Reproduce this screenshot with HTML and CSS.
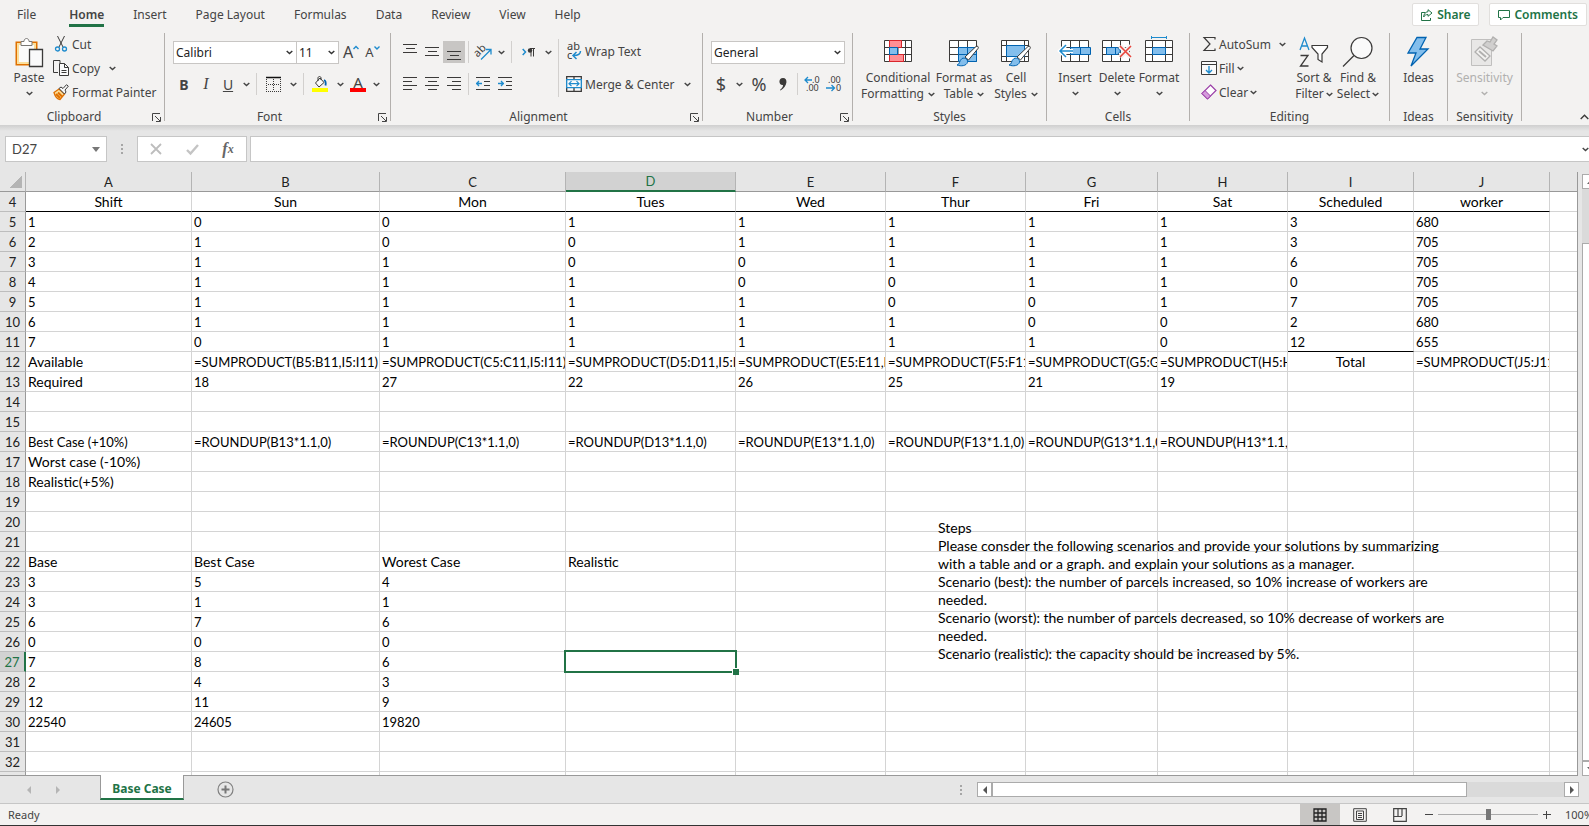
FILE: index.html
```html
<!DOCTYPE html>
<html lang="en">
<head>
  <meta charset="UTF-8">
  <meta name="viewport" content="width=device-width, initial-scale=1.0">
  <title>Base Case</title>
  <link rel="stylesheet" href="styles.css">
</head>
<body>
  <svg class="defs" aria-hidden="true">
    <symbol id="chev" viewBox="0 0 7 5"><path d="M.7.9 3.5 3.6 6.3.9" fill="none" stroke="currentColor" stroke-width="1.4"/></symbol>
    <symbol id="launch" viewBox="0 0 9 9"><path d="M.5 8V.5H8M3 3l5 5M8.500 4v4.500H4" fill="none" stroke="currentColor"/></symbol>
    <symbol id="brush" viewBox="0 0 24 22"><path d="M9 12 20 1.500c1.500-1 3 .3 2 2L12.500 15z" fill="#fff" stroke="#3b3a39"/><path d="M1 20c3-.3 2-4.500 5-6.500 3-1.300 6 1 5.500 3.700C10.500 21 5 21.500 1 20z" fill="#83beec" stroke="#0063b1"/></symbol>
  </svg>

  <header class="topbar">
    <nav class="tabs">
      <a href="#" class="file">File</a>
      <a href="#" class="active">Home</a>
      <a href="#">Insert</a>
      <a href="#">Page Layout</a>
      <a href="#">Formulas</a>
      <a href="#">Data</a>
      <a href="#">Review</a>
      <a href="#">View</a>
      <a href="#">Help</a>
    </nav>
    <div class="top-actions">
      <button class="pill"><svg width="12" height="12" viewBox="0 0 12 12"><path d="M4 3.500H.5v8h9V9M7 .7l4 3.300-4 3.300V5.500C5 5.500 3.500 6.300 2.700 8c0-2.800 1.500-5 4.300-5.300z" fill="none" stroke="#217346"/></svg>Share</button>
      <button class="pill"><svg width="12" height="12" viewBox="0 0 12 12"><path d="M.5 1.500h11v7H5L2.500 11V8.500h-2z" fill="none" stroke="#217346"/></svg>Comments</button>
    </div>
  </header>

  <section class="ribbon">
    <div class="group g-clipboard">
      <div class="group-body">
        <button class="big paste">
          <svg width="28" height="32" viewBox="0 0 28 32"><path d="M1.500 6.500h20v22h-20z" fill="#fff" stroke="#e07000" stroke-width="2"/><path d="M3 8h17v19H3z" fill="#fbfbfb" stroke="#fbdf9b" stroke-width="2"/><path d="M6 9.500v-4h3c0-4 5-4 5 0h3v4z" fill="#fff" stroke="#797775"/><path d="M14.500 13.500h13v17h-13z" fill="#fafafa" stroke="#3b3a39" stroke-width="1.300"/></svg>
          <span>Paste</span><svg class="chev"><use href="#chev"/></svg>
        </button>
        <div class="stack clip-stack">
          <button class="small"><svg width="16" height="16" viewBox="0 0 16 16"><path d="M4.500 0 10 11M11.500 0 6 11" fill="none" stroke="#3b3a39"/><circle cx="4.500" cy="13" r="2" fill="none" stroke="#1e8bcd" stroke-width="1.300"/><circle cx="11.500" cy="13" r="2" fill="none" stroke="#1e8bcd" stroke-width="1.300"/></svg>Cut</button>
          <button class="small"><svg width="16" height="16" viewBox="0 0 16 16"><path d="M5 12.500H.5V.5H7V3" fill="none" stroke="#3b3a39"/><path d="M6.500 3.500h5l4 4v8h-9z" fill="#fafafa" stroke="#3b3a39"/><path d="M11.500 3.500v4h4M8.500 10.500h5M8.500 12.500h5" fill="none" stroke="#3b3a39"/></svg>Copy<svg class="chev gap-l"><use href="#chev"/></svg></button>
          <button class="small"><svg width="16" height="16" viewBox="0 0 16 16"><path d="M1 8.500 6 5l5.500 5L7 15.500C3.500 15 2 12 1 8.500z" fill="#fbdf9b" stroke="#e07000" stroke-width="1.300"/><path d="m3 10 4 4M5 8.500l4 4" stroke="#e07000" stroke-width="2"/><path d="M6 4.500 8 3l2 1.500L13.500.7l1.800 1.500L12 6l1 2-1.500 2z" fill="#fafafa" stroke="#3b3a39"/></svg>Format Painter</button>
        </div>
      </div>
      <div class="group-name has-launcher">Clipboard<button class="launcher" aria-label="Clipboard settings"><svg width="9" height="9"><use href="#launch"/></svg></button></div>
    </div>

    <div class="group g-font">
      <div class="group-body rows">
        <div class="row">
          <select class="sel font-name" aria-label="Font"><option>Calibri</option></select>
          <select class="sel font-size" aria-label="Font size"><option>11</option></select>
          <button class="ico grow-font" aria-label="Increase font size"><span class="glyph-a">A</span><svg width="6" height="14" viewBox="0 0 6 14"><path d="M.5 4 3 1.500 5.500 4" fill="none" stroke="#1e8bcd" stroke-width="1.400"/></svg></button>
          <button class="ico shrink-font" aria-label="Decrease font size"><span class="glyph-a sm">A</span><svg width="6" height="14" viewBox="0 0 6 14"><path d="M.5 1.500 3 4l2.500-2.500" fill="none" stroke="#1e8bcd" stroke-width="1.400"/></svg></button>
        </div>
        <div class="row second">
          <button class="ico w22 fmt"><b>B</b></button>
          <button class="ico w22 fmt"><i>I</i></button>
          <button class="ico w22 fmt"><u>U</u></button>
          <button class="ico w14" aria-label="Underline options"><svg class="chev"><use href="#chev"/></svg></button>
          <span class="sep"></span>
          <button class="ico w26" aria-label="Borders"><svg width="15" height="15" viewBox="0 0 15 15"><path d="M.5 2v13M14.500 2v13M7.500 2v11M2 7.500h12M2 14.500h12" stroke="#3b3a39" stroke-dasharray="1 1" fill="none"/><path d="M0 .5h15" stroke="#111" stroke-width="1.500"/></svg></button>
          <button class="ico w14" aria-label="Border options"><svg class="chev"><use href="#chev"/></svg></button>
          <span class="sep"></span>
          <button class="ico w26" aria-label="Fill color"><svg width="16" height="16" viewBox="0 0 16 16"><path d="M3.500 7 8 2l4 4.500-5 4.500z" fill="#fafafa" stroke="#3b3a39"/><path d="M6 5V2c0-2 3-2 3 0v2" fill="none" stroke="#3b3a39"/><path d="M12 4c2 1 2 3 1.500 5.500" fill="none" stroke="#0063b1" stroke-width="1.800"/><path d="M0 12h16v4H0z" fill="#ff0"/></svg></button>
          <button class="ico w14" aria-label="Fill color options"><svg class="chev"><use href="#chev"/></svg></button>
          <button class="ico w22 font-color" aria-label="Font color"><span>A</span></button>
          <button class="ico w14" aria-label="Font color options"><svg class="chev"><use href="#chev"/></svg></button>
        </div>
      </div>
      <div class="group-name has-launcher">Font<button class="launcher" aria-label="Font settings"><svg width="9" height="9"><use href="#launch"/></svg></button></div>
    </div>

    <div class="group g-align">
      <div class="group-body">
        <div class="rows">
          <div class="row">
            <button class="ico w22" aria-label="Top align"><svg width="14" height="16" viewBox="0 0 14 16"><path d="M0 .5h14M3 4.500h9M0 8.500h14" stroke="#3b3a39"/></svg></button>
            <button class="ico w22" aria-label="Middle align"><svg width="14" height="16" viewBox="0 0 14 16"><path d="M0 3.500h14M3 7.500h9M0 11.500h14" stroke="#3b3a39"/></svg></button>
            <button class="ico w22 on" aria-label="Bottom align"><svg width="14" height="16" viewBox="0 0 14 16"><path d="M0 7.500h14M3 11.500h9M0 15.500h14" stroke="#3b3a39"/></svg></button>
            <span class="sep"></span>
            <button class="ico w22" aria-label="Orientation"><svg width="17" height="16" viewBox="0 0 17 16"><text x="-1" y="11" transform="rotate(-45 4 8)" font-size="11" fill="#3b3a39">ab</text><path d="M6 15.500 15.500 6M11 5.500h5v5" fill="none" stroke="#1e8bcd" stroke-width="1.300"/></svg></button>
            <button class="ico w14" aria-label="Orientation options"><svg class="chev"><use href="#chev"/></svg></button>
            <span class="sep"></span>
            <button class="ico w26" aria-label="Text direction"><svg width="13" height="12" viewBox="0 0 13 12"><path d="M.7 3 3.500 6 .7 9" fill="none" stroke="#1e8bcd" stroke-width="1.500"/><path d="M9 2.500v8M11.500 2.500v8M8 2.500h5" stroke="#3b3a39" fill="none"/><circle cx="8" cy="4.500" r="2.200" fill="#3b3a39"/></svg></button>
            <button class="ico w14" aria-label="Direction options"><svg class="chev"><use href="#chev"/></svg></button>
          </div>
          <div class="row second">
            <button class="ico w22" aria-label="Align left"><svg width="14" height="14" viewBox="0 0 14 14"><path d="M0 .5h14M0 4.500h9M0 8.500h14M0 12.500h9" stroke="#3b3a39"/></svg></button>
            <button class="ico w22" aria-label="Center"><svg width="14" height="14" viewBox="0 0 14 14"><path d="M0 .5h14M3 4.500h9M0 8.500h14M3 12.500h9" stroke="#3b3a39"/></svg></button>
            <button class="ico w22" aria-label="Align right"><svg width="14" height="14" viewBox="0 0 14 14"><path d="M0 .5h14M5 4.500h9M0 8.500h14M5 12.500h9" stroke="#3b3a39"/></svg></button>
            <span class="sep"></span>
            <button class="ico w22" aria-label="Decrease indent"><svg width="14" height="14" viewBox="0 0 14 14"><path d="M0 .5h14M8 4.500h6M8 8.500h6M0 12.500h14" stroke="#3b3a39"/><path d="M0 6.500h6M3 4 .7 6.500 3 9" stroke="#1e8bcd" stroke-width="1.300" fill="none"/></svg></button>
            <button class="ico w22" aria-label="Increase indent"><svg width="14" height="14" viewBox="0 0 14 14"><path d="M0 .5h14M8 4.500h6M8 8.500h6M0 12.500h14" stroke="#3b3a39"/><path d="M0 6.500h6M3 4l2.300 2.500L3 9" stroke="#1e8bcd" stroke-width="1.300" fill="none"/></svg></button>
          </div>
        </div>
        <div class="stack wrap-stack">
          <button class="small"><svg width="16" height="18" viewBox="0 0 16 18"><text x="1" y="8" font-size="11" fill="#3b3a39">ab</text><text x="1" y="17" font-size="11" fill="#3b3a39">c</text><path d="M14.500 9c0 4-3 4.500-7 4.500M10.500 10 7 13.500l3.500 3.500" fill="none" stroke="#1e8bcd" stroke-width="1.500"/></svg>Wrap Text</button>
          <button class="small"><svg width="16" height="16" viewBox="0 0 16 16"><path d="M.7.700h14.600v14.600H.7zM8 1v3M8 12v3" fill="#fafafa" stroke="#3b3a39" stroke-width="1.300"/><path d="M.7 3.700h14.600v8H.7z" fill="#fafafa" stroke="#1e8bcd" stroke-width="1.300"/><path d="M3 7.700h10M5.500 5.200 3 7.700l2.500 2.500M10.500 5.200 13 7.700l-2.500 2.500" fill="none" stroke="#1e8bcd" stroke-width="1.200"/></svg>Merge &amp; Center<svg class="chev gap-l"><use href="#chev"/></svg></button>
        </div>
      </div>
      <div class="group-name has-launcher">Alignment<button class="launcher" aria-label="Alignment settings"><svg width="9" height="9"><use href="#launch"/></svg></button></div>
    </div>

    <div class="group g-number">
      <div class="group-body rows">
        <div class="row">
          <select class="sel number-format" aria-label="Number format"><option>General</option></select>
        </div>
        <div class="row second">
          <button class="ico w22 num">$</button>
          <button class="ico w14" aria-label="Currency options"><svg class="chev"><use href="#chev"/></svg></button>
          <button class="ico w26 num">%</button>
          <button class="ico w22" aria-label="Comma style"><svg width="8" height="13" viewBox="0 0 8 13"><path d="M4 0c5 0 5 8-2.500 12.500L1 12c2.500-2 3-3.500 3-5C-.5 7.500-1 0 4 0z" fill="#3b3a39"/></svg></button>
          <span class="sep"></span>
          <button class="ico w22" aria-label="Increase decimal"><svg width="16" height="16" viewBox="0 0 16 16"><text x="8" y="7" font-size="9" fill="#3b3a39">.0</text><text x="2" y="15" font-size="9" fill="#3b3a39">.00</text><path d="M1 4h7M4 1 1 4l3 3" fill="none" stroke="#1e8bcd" stroke-width="1.300"/></svg></button>
          <button class="ico w22" aria-label="Decrease decimal"><svg width="16" height="16" viewBox="0 0 16 16"><text x="2" y="7" font-size="9" fill="#3b3a39">.00</text><text x="10" y="15" font-size="9" fill="#3b3a39">0</text><path d="M0 12h8M5.500 9l3 3-3 3" fill="none" stroke="#1e8bcd" stroke-width="1.300"/></svg></button>
        </div>
      </div>
      <div class="group-name has-launcher">Number<button class="launcher" aria-label="Number settings"><svg width="9" height="9"><use href="#launch"/></svg></button></div>
    </div>

    <div class="group g-styles">
      <div class="group-body">
        <button class="big w80">
          <svg width="28" height="32" viewBox="0 0 28 32"><path d="M.5 4.500h27v21H.5zM5.500 4v22M14 4v22M21.500 4v22M0 11.500h28M0 18.500h28" fill="#fff" stroke="#3b3a39"/><path d="M5.500 4.500h12v7h-12zM5.500 18.500h14v7h-14z" fill="#ff8f94" stroke="#d9262c"/><path d="M5.500 11.500h8v7h-8z" fill="#83beec" stroke="#0063b1"/></svg>
          <span>Conditional</span><span>Formatting<svg class="chev"><use href="#chev"/></svg></span>
        </button>
        <button class="big w52">
          <svg width="32" height="32" viewBox="0 0 32 32"><path d="M1.500 4.500h27v21h-27zM10.500 4v22M19.500 4v22M1 11.500h28M1 18.500h28" fill="#fff" stroke="#3b3a39"/><path d="M10.500 11.500h18v14h-18z" fill="#83beec" stroke="#0063b1"/><path d="M19.500 12v13M11 18.500h17" stroke="#0063b1"/><use href="#brush" x="8" y="9" width="24" height="22"/></svg>
          <span>Format as</span><span>Table<svg class="chev"><use href="#chev"/></svg></span>
        </button>
        <button class="big w52">
          <svg width="32" height="32" viewBox="0 0 32 32"><path d="M1.500 4.500h27v21h-27zM6.500 4v22M24.500 4v22M1 9.500h28M1 20.500h28" fill="#fff" stroke="#3b3a39"/><path d="M6.500 9.500h18v11h-18z" fill="#83beec" stroke="#0063b1"/><use href="#brush" x="8" y="9" width="24" height="22"/></svg>
          <span>Cell</span><span>Styles<svg class="chev"><use href="#chev"/></svg></span>
        </button>
      </div>
      <div class="group-name">Styles</div>
    </div>

    <div class="group g-cells">
      <div class="group-body">
        <button class="big w42">
          <svg width="32" height="32" viewBox="0 0 32 32"><path d="M2.500 4.500h27v21h-27zM11.500 4v22M20.500 4v22M2 11.500h28M2 18.500h28" fill="#fff" stroke="#3b3a39"/><path d="M11.500 11.500h20v7h-20zM21.500 12v7" fill="#83beec" stroke="#0063b1"/><path d="M14 15H1M7 9l-6 6 6 6" fill="none" stroke="#fff" stroke-width="4"/><path d="M14 15H1M7 9l-6 6 6 6" fill="none" stroke="#1e8bcd" stroke-width="1.500"/></svg>
          <span>Insert</span><svg class="chev"><use href="#chev"/></svg>
        </button>
        <button class="big w42">
          <svg width="32" height="32" viewBox="0 0 32 32"><path d="M1.500 4.500h27v21h-27zM10.500 4v22M19.500 4v22M1 11.500h28M1 18.500h28" fill="#fff" stroke="#3b3a39"/><path d="M5.500 11.500h11l3 3.500-3 3.500h-11zM14.500 12v6" fill="#83beec" stroke="#0063b1"/><path d="m19 10 11 11M30 10 19 21" stroke="#f3f2f1" stroke-width="5"/><path d="m19 10 11 11M30 10 19 21" stroke="#e8453c" stroke-width="1.600"/></svg>
          <span>Delete</span><svg class="chev"><use href="#chev"/></svg>
        </button>
        <button class="big w42">
          <svg width="28" height="32" viewBox="0 0 28 32"><path d="M.5 4.500h27v21H.5zM7.500 4v22M20.500 4v22M0 11.500h28M0 18.500h28" fill="#fff" stroke="#3b3a39"/><path d="M7.500 11.500h13v7h-13z" fill="#83beec" stroke="#0063b1"/><path d="M6.500 0v3M21.500 0v3M7 1.500h14" stroke="#1e8bcd"/></svg>
          <span>Format</span><svg class="chev"><use href="#chev"/></svg>
        </button>
      </div>
      <div class="group-name">Cells</div>
    </div>

    <div class="group g-editing">
      <div class="group-body">
        <div class="stack edit-stack">
          <button class="small"><svg width="16" height="16" viewBox="0 0 16 16"><path d="M14 3.500V1.500H3L9 8l-6 6.500h11v-2" fill="none" stroke="#3b3a39" stroke-width="1.200"/></svg>AutoSum<svg class="chev gap-l"><use href="#chev"/></svg></button>
          <button class="small"><svg width="16" height="16" viewBox="0 0 16 16"><path d="M.5 1.500h15v13H.5zM.5 4.500h15" fill="#fafafa" stroke="#3b3a39"/><path d="M8 6v7M5 10l3 3 3-3" fill="none" stroke="#1e8bcd" stroke-width="1.400"/></svg>Fill<svg class="chev"><use href="#chev"/></svg></button>
          <button class="small"><svg width="16" height="16" viewBox="0 0 16 16"><path d="M9.500 1 15 6.500 6.500 15 1 9.500z" fill="#fff" stroke="#9b3fa8" stroke-width="1.200"/><path d="M4 6.500 9.500 12l-3 3L1 9.500z" fill="#d59bdc" stroke="#9b3fa8"/></svg>Clear<svg class="chev"><use href="#chev"/></svg></button>
        </div>
        <button class="big w44">
          <svg width="30" height="32" viewBox="0 0 30 32"><path d="m1 14 4.500-12L10 14M2.500 10h6" fill="none" stroke="#1e8bcd" stroke-width="1.300"/><path d="M1.500 19.500h7.500L1.500 30H9.500" fill="none" stroke="#3b3a39" stroke-width="1.300"/><path d="M13 9.500h15.500v2L23 18v8l-4-2.500V18l-6-6.500z" fill="#fff" stroke="#3b3a39" stroke-width="1.200"/></svg>
          <span>Sort &amp;</span><span>Filter<svg class="chev"><use href="#chev"/></svg></span>
        </button>
        <button class="big w44">
          <svg width="30" height="32" viewBox="0 0 30 32"><circle cx="18.500" cy="12" r="10.500" fill="#fafafa" stroke="#3b3a39" stroke-width="1.200"/><path d="M11 19.500 0 30.500" stroke="#3b3a39" stroke-width="1.300"/></svg>
          <span>Find &amp;</span><span>Select<svg class="chev"><use href="#chev"/></svg></span>
        </button>
      </div>
      <div class="group-name">Editing</div>
    </div>

    <div class="group g-ideas">
      <div class="group-body">
        <button class="big">
          <svg width="22" height="32" viewBox="0 0 22 32"><path d="M10 1.500h9L13 13h8L4 30l5-13H1z" fill="#83beec" stroke="#0063b1" stroke-width="1.300"/></svg>
          <span>Ideas</span>
        </button>
      </div>
      <div class="group-name">Ideas</div>
    </div>

    <div class="group g-sens">
      <div class="group-body">
        <button class="big" disabled>
          <svg width="28" height="32" viewBox="0 0 28 32"><path d="M1.500 3.500h20v26h-20z" fill="#e8e7e6" stroke="#c0bfbe"/><path d="m5 16 5-5L20 20l-5 5z" fill="#f3f2f1" stroke="#b1b0af" stroke-width="1.300"/><path d="m9 15 7 6" stroke="#b1b0af" stroke-width="2"/><path d="m13 9 4-4 3 1 3-5 4 3-3 4 3 2-4 5z" fill="#d0cfce" stroke="#b1b0af" stroke-width="1.300"/></svg>
          <span>Sensitivity</span><svg class="chev"><use href="#chev"/></svg>
        </button>
      </div>
      <div class="group-name">Sensitivity</div>
    </div>
    <button class="collapse" aria-label="Collapse ribbon"><svg width="9" height="6" viewBox="0 0 9 6"><path d="M.7 5 4.500 1.300 8.300 5" fill="none" stroke="#3b3a39" stroke-width="1.400"/></svg></button>
  </section>

  <section class="formula-bar">
    <div class="name-box"><input type="text" value="D27" aria-label="Name box"><svg width="8" height="5" viewBox="0 0 8 5"><path d="M0 0h8L4 5z" fill="#777"/></svg></div>
    <span class="dots"><i></i><i></i><i></i></span>
    <div class="fx-buttons">
      <button aria-label="Cancel"><svg width="12" height="12" viewBox="0 0 12 12"><path d="m1 1 10 10M11 1 1 11" stroke="#bdbdbd" stroke-width="1.800"/></svg></button>
      <button aria-label="Enter"><svg width="13" height="11" viewBox="0 0 13 11"><path d="m1 6 3.500 3.500L12 1" fill="none" stroke="#c4c4c4" stroke-width="2.400"/></svg></button>
      <button class="fx" aria-label="Insert function">f<sub>x</sub></button>
    </div>
    <input class="formula" type="text" aria-label="Formula">
    <button class="expand" aria-label="Expand formula bar"><svg class="chev"><use href="#chev"/></svg></button>
  </section>

  <main class="sheet">
    <div class="grid-wrap">
      <table class="grid">
        <colgroup><col class="c-head"><col class="c-a"><col class="c-b"><col class="c-c"><col class="c-d"><col class="c-e"><col class="c-f"><col class="c-g"><col class="c-h"><col class="c-i"><col class="c-j"><col></colgroup>
        <thead>
          <tr><th class="corner"></th><th>A</th><th>B</th><th>C</th><th class="sel-col">D</th><th>E</th><th>F</th><th>G</th><th>H</th><th>I</th><th>J</th><th></th></tr>
        </thead>
        <tbody>
          <tr class="titles"><th>4</th><td>Shift</td><td>Sun</td><td>Mon</td><td>Tues</td><td>Wed</td><td>Thur</td><td>Fri</td><td>Sat</td><td>Scheduled</td><td>worker</td><td></td></tr>
          <tr><th>5</th><td>1</td><td>0</td><td>0</td><td>1</td><td>1</td><td>1</td><td>1</td><td>1</td><td>3</td><td>680</td><td></td></tr>
          <tr><th>6</th><td>2</td><td>1</td><td>0</td><td>0</td><td>1</td><td>1</td><td>1</td><td>1</td><td>3</td><td>705</td><td></td></tr>
          <tr><th>7</th><td>3</td><td>1</td><td>1</td><td>0</td><td>0</td><td>1</td><td>1</td><td>1</td><td>6</td><td>705</td><td></td></tr>
          <tr><th>8</th><td>4</td><td>1</td><td>1</td><td>1</td><td>0</td><td>0</td><td>1</td><td>1</td><td>0</td><td>705</td><td></td></tr>
          <tr><th>9</th><td>5</td><td>1</td><td>1</td><td>1</td><td>1</td><td>0</td><td>0</td><td>1</td><td>7</td><td>705</td><td></td></tr>
          <tr><th>10</th><td>6</td><td>1</td><td>1</td><td>1</td><td>1</td><td>1</td><td>0</td><td>0</td><td>2</td><td>680</td><td></td></tr>
          <tr><th>11</th><td>7</td><td>0</td><td>1</td><td>1</td><td>1</td><td>1</td><td>1</td><td>0</td><td class="line">12</td><td>655</td><td></td></tr>
          <tr><th>12</th><td class="text">Available</td><td>=SUMPRODUCT(B5:B11,I5:I11)</td><td>=SUMPRODUCT(C5:C11,I5:I11)</td><td>=SUMPRODUCT(D5:D11,I5:I11)</td><td>=SUMPRODUCT(E5:E11,I5:I11)</td><td>=SUMPRODUCT(F5:F11,I5:I11)</td><td>=SUMPRODUCT(G5:G11,I5:I11)</td><td>=SUMPRODUCT(H5:H11,I5:I11)</td><td class="text center">Total</td><td>=SUMPRODUCT(J5:J11,I5:I11)</td><td></td></tr>
          <tr><th>13</th><td class="text">Required</td><td>18</td><td>27</td><td>22</td><td>26</td><td>25</td><td>21</td><td>19</td><td></td><td></td><td></td></tr>
          <tr><th>14</th><td></td><td></td><td></td><td></td><td></td><td></td><td></td><td></td><td></td><td></td><td></td></tr>
          <tr><th>15</th><td></td><td></td><td></td><td></td><td></td><td></td><td></td><td></td><td></td><td></td><td></td></tr>
          <tr><th>16</th><td>Best Case (+10%)</td><td>=ROUNDUP(B13*1.1,0)</td><td>=ROUNDUP(C13*1.1,0)</td><td>=ROUNDUP(D13*1.1,0)</td><td>=ROUNDUP(E13*1.1,0)</td><td>=ROUNDUP(F13*1.1,0)</td><td>=ROUNDUP(G13*1.1,0)</td><td>=ROUNDUP(H13*1.1,0)</td><td></td><td></td><td></td></tr>
          <tr><th>17</th><td class="text">Worst case (-10%)</td><td></td><td></td><td></td><td></td><td></td><td></td><td></td><td></td><td></td><td></td></tr>
          <tr><th>18</th><td class="text">Realistic(+5%)</td><td></td><td></td><td></td><td></td><td></td><td></td><td></td><td></td><td></td><td></td></tr>
          <tr><th>19</th><td></td><td></td><td></td><td></td><td></td><td></td><td></td><td></td><td></td><td></td><td></td></tr>
          <tr><th>20</th><td></td><td></td><td></td><td></td><td></td><td></td><td></td><td></td><td></td><td></td><td></td></tr>
          <tr><th>21</th><td></td><td></td><td></td><td></td><td></td><td></td><td></td><td></td><td></td><td></td><td></td></tr>
          <tr><th>22</th><td class="text">Base</td><td class="text">Best Case</td><td class="text">Worest Case</td><td class="text">Realistic</td><td></td><td></td><td></td><td></td><td></td><td></td><td></td></tr>
          <tr><th>23</th><td>3</td><td>5</td><td>4</td><td></td><td></td><td></td><td></td><td></td><td></td><td></td><td></td></tr>
          <tr><th>24</th><td>3</td><td>1</td><td>1</td><td></td><td></td><td></td><td></td><td></td><td></td><td></td><td></td></tr>
          <tr><th>25</th><td>6</td><td>7</td><td>6</td><td></td><td></td><td></td><td></td><td></td><td></td><td></td><td></td></tr>
          <tr><th>26</th><td>0</td><td>0</td><td>0</td><td></td><td></td><td></td><td></td><td></td><td></td><td></td><td></td></tr>
          <tr><th class="sel-row">27</th><td>7</td><td>8</td><td>6</td><td class="active-cell"></td><td></td><td></td><td></td><td></td><td></td><td></td><td></td></tr>
          <tr><th>28</th><td>2</td><td>4</td><td>3</td><td></td><td></td><td></td><td></td><td></td><td></td><td></td><td></td></tr>
          <tr><th>29</th><td>12</td><td>11</td><td>9</td><td></td><td></td><td></td><td></td><td></td><td></td><td></td><td></td></tr>
          <tr><th>30</th><td>22540</td><td>24605</td><td>19820</td><td></td><td></td><td></td><td></td><td></td><td></td><td></td><td></td></tr>
          <tr><th>31</th><td></td><td></td><td></td><td></td><td></td><td></td><td></td><td></td><td></td><td></td><td></td></tr>
          <tr><th>32</th><td></td><td></td><td></td><td></td><td></td><td></td><td></td><td></td><td></td><td></td><td></td></tr>
          <tr><th></th><td></td><td></td><td></td><td></td><td></td><td></td><td></td><td></td><td></td><td></td><td></td></tr>
        </tbody>
      </table>
      <div class="note">
        <p>Steps</p>
        <p>Please consder the following scenarios and provide your solutions by summarizing with a table and or a graph. and explain your solutions as a manager.</p>
        <p>Scenario (best): the number of parcels increased, so 10% increase of workers are needed.</p>
        <p>Scenario (worst): the number of parcels decreased, so 10% decrease of workers are needed.</p>
        <p>Scenario (realistic): the capacity should be increased by 5%.</p>
      </div>
    </div>
    <div class="vscroll">
      <button aria-label="Scroll up"><svg width="7" height="4" viewBox="0 0 7 4"><path d="M0 4h7L3.500 0z" fill="#666"/></svg></button>
      <div class="vtrack"><div class="vthumb"></div></div>
      <button aria-label="Scroll down"><svg width="7" height="4" viewBox="0 0 7 4"><path d="M0 0h7L3.500 4z" fill="#666"/></svg></button>
    </div>
  </main>

  <section class="sheet-tabs">
    <div class="tab-nav">
      <button aria-label="Previous sheet"><svg width="4" height="8" viewBox="0 0 4 8"><path d="M4 0v8L0 4z" fill="#b5b5b5"/></svg></button>
      <button aria-label="Next sheet"><svg width="4" height="8" viewBox="0 0 4 8"><path d="M0 0v8l4-4z" fill="#b5b5b5"/></svg></button>
    </div>
    <button class="sheet-tab">Base Case</button>
    <button class="add-sheet" aria-label="New sheet"><svg width="17" height="17" viewBox="0 0 17 17"><circle cx="8.500" cy="8.500" r="7.500" fill="none" stroke="#808080" stroke-width="1.200"/><path d="M8.500 4.500v8M4.500 8.500h8" stroke="#777" stroke-width="2"/></svg></button>
    <span class="dots"><i></i><i></i><i></i></span>
    <div class="hscroll">
      <button aria-label="Scroll left"><svg width="4" height="8" viewBox="0 0 4 8"><path d="M4 0v8L0 4z" fill="#555"/></svg></button>
      <div class="htrack"><div class="hthumb"></div></div>
      <button aria-label="Scroll right"><svg width="4" height="8" viewBox="0 0 4 8"><path d="M0 0v8l4-4z" fill="#555"/></svg></button>
    </div>
  </section>

  <footer class="status">
    <span class="ready">Ready</span>
    <button class="view on" aria-label="Normal view"><svg width="14" height="14" viewBox="0 0 14 14"><path d="M1 1h12v12H1zM5 1v12M9 1v12M1 5h12M1 9h12" fill="none" stroke="#222" stroke-width="1.300"/></svg></button>
    <button class="view" aria-label="Page layout view"><svg width="14" height="14" viewBox="0 0 14 14"><path d="M.7.700h12.600v12.600H.7zM3.500 3h7v8.500h-7zM5 5.500h4M5 7.500h4M5 9.500h4" fill="none" stroke="#444"/></svg></button>
    <button class="view" aria-label="Page break preview"><svg width="14" height="14" viewBox="0 0 14 14"><path d="M.7.700h12.600v12.600H.7zM5 1v7M9 1v7M1 8.500h8" fill="none" stroke="#444" stroke-width="1.200"/></svg></button>
    <button class="zoom-btn" aria-label="Zoom out"><svg width="8" height="8" viewBox="0 0 8 8"><path d="M0 3.500h8" stroke="#444"/></svg></button>
    <input class="zoom" type="range" min="0" max="100" value="50" aria-label="Zoom">
    <button class="zoom-btn" aria-label="Zoom in"><svg width="8" height="8" viewBox="0 0 8 8"><path d="M0 3.500h8M3.500 0v8" stroke="#444"/></svg></button>
    <span class="percent">100%</span>
  </footer>
</body>
</html>
```
FILE: styles.css
```css
* {
  box-sizing: border-box;
}
body {
  margin: 0;
  height: 100vh;
  display: flex;
  flex-direction: column;
  overflow: hidden;
  background: #e6e6e6;
  color: #444;
  font-family: "Noto Sans", "Open Sans", sans-serif;
  font-size: 12px;
  white-space: nowrap;
}
button, input, select {
  font: inherit;
  color: inherit;
  margin: 0;
  padding: 0;
  border: 0;
  background: none;
  border-radius: 0;
}
button {
  display: flex;
  align-items: center;
  justify-content: center;
  flex: none;
}
button:disabled {
  color: #b1b0af;
}
svg {
  flex: none;
  overflow: visible;
}
.defs {
  position: absolute;
  width: 0;
  height: 0;
}
.chev {
  width: 7px;
  height: 5px;
}

/* tabs */
.topbar {
  display: flex;
  justify-content: space-between;
  height: 33px;
  flex: none;
  background: #f3f2f1;
}
.tabs {
  display: flex;
  align-items: flex-start;
  gap: 29px;
  padding-left: 17px;
}
.tabs a {
  color: #444;
  text-decoration: none;
  line-height: 18px;
  padding-top: 6px;
}
.tabs .file {
  margin-right: 4px;
}
.tabs .active {
  font-weight: 600;
  border-bottom: 3px solid #217346;
}
.top-actions {
  display: flex;
  gap: 10px;
  padding: 3px 2px 0 0;
}
.pill {
  height: 23px;
  padding: 0 8px;
  gap: 4px;
  background: #fff;
  border: 1px solid #e1dfdd;
  border-radius: 2px;
  color: #217346;
  font-weight: 600;
}

/* ribbon */
.ribbon {
  display: flex;
  flex: none;
  padding-bottom: 4px;
  background: #f3f2f1;
}
.group {
  display: flex;
  flex-direction: column;
  flex: none;
  height: 88px;
  border-right: 1px solid #b3b0ad;
}
.g-clipboard { width: 165px; }
.g-font { width: 226px; }
.g-align { width: 312px; }
.g-number { width: 150px; }
.g-styles { width: 194px; }
.g-cells { width: 143px; }
.g-editing { width: 200px; }
.g-ideas { width: 58px; }
.g-sens { width: 74px; }
.group-body {
  display: flex;
  flex: 1;
}
.group-name {
  display: flex;
  justify-content: center;
  position: relative;
  height: 8px;
  line-height: 8px;
}
.has-launcher {
  padding-right: 16px;
}
.launcher {
  position: absolute;
  right: 3px;
  top: 0;
}
.big {
  flex-direction: column;
  justify-content: flex-start;
  padding-top: 3px;
  line-height: 16px;
}
.big > span {
  display: flex;
  align-items: center;
  gap: 4px;
}
.big > svg:first-child {
  margin-bottom: 2px;
}
.big > .chev {
  margin-top: 5px;
}
.w80 { width: 80px; }
.w52 { width: 52px; }
.w42 { width: 42px; }
.w44 { width: 44px; }
.w44 > span {
  gap: 2px;
}
.g-styles .group-body { padding-left: 5px; }
.g-cells .group-body { padding-left: 7px; }
.g-ideas .group-body, .g-sens .group-body { justify-content: center; }
.paste {
  width: 30px;
  margin-left: 14px;
}
.stack {
  display: flex;
  flex-direction: column;
  align-items: flex-start;
}
.small {
  height: 24px;
  gap: 3px;
}
.clip-stack {
  margin-left: 9px;
}
.clip-stack .small, .edit-stack .small {
  padding-bottom: 2px;
}
.gap-l {
  margin-left: 6px;
}
.wrap-stack {
  gap: 9px;
  margin: 6px 0 0 3px;
  padding-left: 7px;
  border-left: 1px solid #d2d0ce;
  height: 58px;
}
.edit-stack {
  width: 91px;
  margin-left: 11px;
}
.edit-stack .small {
  gap: 2px;
}
.rows {
  display: flex;
  flex-direction: column;
}
.row {
  display: flex;
  align-items: center;
  height: 22px;
  margin-top: 8px;
  padding-left: 8px;
}
.row.second {
  margin-top: 10px;
}
.sep {
  width: 1px;
  height: 22px;
  margin: 0 3px;
  background: #d2d0ce;
}
.ico {
  height: 22px;
}
.on {
  background: #c8c6c4;
}
.w14 { width: 14px; }
.w22 { width: 22px; }
.w26 { width: 26px; }
.sel {
  appearance: none;
  height: 23px;
  padding: 0 2px;
  border: 1px solid #c8c6c4;
  background: #fff url("data:image/svg+xml,%3Csvg xmlns='http://www.w3.org/2000/svg' width='7' height='5'%3E%3Cpath d='M.7.9 3.500 3.600 6.300.9' fill='none' stroke='%23333' stroke-width='1.400'/%3E%3C/svg%3E") no-repeat right 3px center;
  color: #222;
}
.font-name { width: 124px; }
.font-size { width: 43px; margin-left: -1px; }
.grow-font {
  margin-left: 4px;
}
.shrink-font {
  margin-left: 6px;
}
.glyph-a {
  font-size: 16px;
}
.glyph-a.sm {
  font-size: 13px;
}
.fmt {
  font-size: 14px;
}
.fmt i {
  font-family: "Liberation Serif", serif;
  font-size: 16px;
}
.font-color span {
  width: 16px;
  height: 16px;
  font-size: 15px;
  line-height: 12px;
  border-bottom: 4px solid #f00;
}
.number-format {
  width: 134px;
}
.num {
  font-size: 18px;
}
.g-number .second {
  padding-left: 7px;
}
.collapse {
  align-self: flex-end;
  margin: 0 0 1px auto;
}

/* formula bar */
.formula-bar {
  display: flex;
  flex: none;
  height: 47px;
  padding: 11px 0 0 5px;
  background: linear-gradient(#cfcfcf, #e6e6e6 6px);
}
.name-box, .fx-buttons, .formula {
  height: 26px;
  border: 1px solid #c6c6c6;
  background: #fff;
}
.name-box {
  display: flex;
  align-items: center;
  width: 102px;
  padding: 0 6px;
}
.name-box input {
  flex: 1;
  min-width: 0;
  font: 13px Lato, sans-serif;
}
.dots {
  display: flex;
  flex-direction: column;
  justify-content: center;
  gap: 2px;
  height: 26px;
  margin: 0 14px;
}
.dots i {
  width: 2px;
  height: 2px;
  background: #a6a6a6;
}
.fx-buttons {
  display: flex;
  width: 110px;
  margin-right: 3px;
}
.fx-buttons button {
  flex: 1;
}
.fx {
  color: #666;
  font: italic bold 16px "Liberation Serif", serif;
}
.fx sub {
  font-size: 12px;
}
.formula {
  flex: 1;
  border-right: 0;
}
.expand {
  height: 26px;
  background: #fff;
  border: 1px solid #c6c6c6;
  border-width: 1px 0;
}

/* grid */
.sheet {
  display: flex;
  flex: 1;
  min-height: 0;
  overflow: hidden;
}
.grid-wrap {
  position: relative;
  flex: 1;
  overflow: hidden;
  border-right: 1px solid #999;
  border-bottom: 1px solid #999;
}
.grid {
  width: 100%;
  table-layout: fixed;
  border-collapse: separate;
  border-spacing: 0;
  background: #fff;
  color: #000;
  font: 13px/18px Lato, "Noto Sans", sans-serif;
}
.c-head { width: 26px; }
.c-a { width: 166px; }
.c-b { width: 188px; }
.c-c { width: 186px; }
.c-d { width: 170px; }
.c-e { width: 150px; }
.c-f { width: 140px; }
.c-g { width: 132px; }
.c-h { width: 130px; }
.c-i { width: 126px; }
.c-j { width: 136px; }
.grid th, .grid td {
  height: 20px;
  padding: 1px 0 0;
  border-right: 1px solid #d4d4d4;
  border-bottom: 1px solid #d4d4d4;
  overflow: hidden;
}
.grid td {
  padding-left: 2px;
}
.grid th {
  background: #e6e6e6;
  border-color: #999;
  font-weight: 400;
  color: #222;
}
.grid tbody th {
  border-bottom-color: #bdbdbd;
}
.grid td:last-child, .grid thead th:last-child {
  border-right: 0;
}
.grid thead th {
  border-right-color: #b4b4b4;
}
.grid .corner {
  background: linear-gradient(135deg, transparent 50%, #b4b4b4 50%) no-repeat 10px 4px / 12px 12px #e6e6e6;
}
.grid .sel-col {
  padding: 0;
  background: #d2d2d2;
  color: #217346;
  border-bottom: 2px solid #217346;
}
.grid .sel-row {
  background: #d2d2d2;
  color: #217346;
  border-right: 2px solid #217346;
}
.titles td, .grid .text {
  font-size: 14px;
}
.grid .titles td, .grid .center {
  padding-left: 0;
  text-align: center;
}
.grid .titles td:not(:last-child), .grid .line {
  border-bottom-color: #000;
}
.grid .active-cell {
  position: relative;
  overflow: visible;
}
.active-cell::before {
  content: "";
  position: absolute;
  inset: -2px;
  border: 2px solid #217346;
}
.active-cell::after {
  content: "";
  position: absolute;
  right: -4px;
  bottom: -4px;
  width: 6px;
  height: 6px;
  background: #217346;
  border: solid #fff;
  border-width: 1px 0 0 1px;
}
.note {
  position: absolute;
  left: 938px;
  top: 347px;
  width: 515px;
  color: #000;
  font: 14px/18px Lato, "Noto Sans", sans-serif;
  white-space: normal;
}
.note p {
  margin: 0;
}
.vscroll {
  display: flex;
  flex-direction: column;
  width: 7px;
  margin: 2px 0 0 4px;
  overflow: hidden;
}
.vscroll button {
  width: 16px;
  height: 15px;
  background: #fff;
  border: 1px solid #ababab;
}
.vtrack {
  flex: 1;
  width: 16px;
  padding-top: 54px;
  background: #dadada;
}
.vthumb {
  height: 100%;
  background: #fff;
  border: 1px solid #ababab;
}

/* sheet tabs */
.sheet-tabs {
  display: flex;
  align-items: center;
  flex: none;
  height: 27px;
  padding-right: 10px;
}
.tab-nav {
  display: flex;
  width: 100px;
  padding-left: 27px;
  gap: 25px;
}
.sheet-tab {
  align-self: flex-start;
  width: 84px;
  height: 25px;
  margin-top: -1px;
  padding-top: 3px;
  background: #fff;
  border: 1px solid #999;
  border-width: 0 1px 2px;
  border-bottom-color: #217346;
  color: #217346;
  font-weight: 700;
  z-index: 1;
}
.add-sheet {
  margin: 0 auto 0 33px;
}
.sheet-tabs .dots {
  margin: 0 15px;
}
.hscroll {
  display: flex;
  width: 602px;
  height: 15px;
}
.hscroll button {
  width: 15px;
  background: #fff;
  border: 1px solid #ababab;
}
.htrack {
  flex: 1;
  background: #dadada;
}
.hthumb {
  width: 83%;
  height: 15px;
  background: #fff;
  border: 1px solid #ababab;
}

/* status bar */
.status {
  display: flex;
  align-items: center;
  flex: none;
  height: 23px;
  background: #f3f2f1;
  border: solid #333;
  border-width: 1px 0;
  border-top-color: #c6c6c6;
  font-size: 11px;
}
.ready {
  margin: 0 auto 0 8px;
}
.view {
  width: 40px;
  height: 21px;
}
.zoom-btn {
  margin: 0 5px;
}
.zoom {
  appearance: none;
  width: 100px;
  height: 11px;
  background: linear-gradient(#ababab, #ababab) no-repeat center / 100% 1px;
}
.zoom::-webkit-slider-thumb {
  appearance: none;
  width: 5px;
  height: 11px;
  background: #777;
}
.percent {
  width: 24px;
  margin-left: 9px;
}
```
